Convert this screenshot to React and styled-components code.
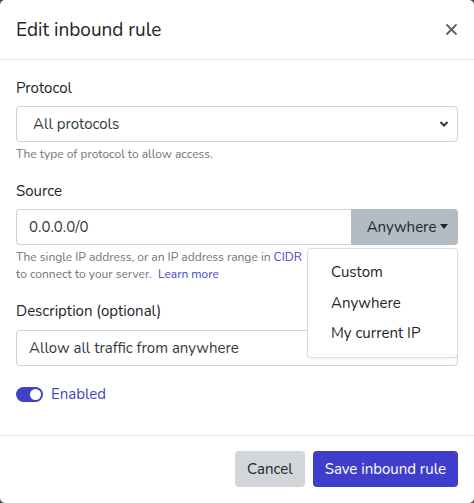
import styled, { createGlobalStyle } from "styled-components";

const Global = createGlobalStyle`
  html, body {
    margin: 0;
    padding: 0;
    background: #4a4a4a;
  }
  body {
    font-family: "Nunito", Lato, "Open Sans", sans-serif;
    color: #212529;
  }
  * { box-sizing: border-box; }
`;

const Modal = styled.div`
  width: 474px;
  height: 503px;
  background: #fff;
  border-radius: 5px;
  display: flex;
  flex-direction: column;
  overflow: hidden;
`;

const Header = styled.div`
  display: flex;
  align-items: center;
  justify-content: space-between;
  height: 60px;
  padding: 0 16px;
  border-bottom: 1px solid #e3e6ea;
`;

const Title = styled.h5`
  margin: 0;
  font-size: 19px;
  font-weight: 400;
  line-height: 28px;
  color: #212529;
`;

const Close = styled.button`
  border: 0;
  background: none;
  padding: 0;
  width: 20px;
  height: 20px;
  display: flex;
  align-items: center;
  justify-content: center;
  color: #5f6368;
  margin-right: -3px;
`;

const Body = styled.div`
  flex: 1;
  padding: 16px 16px 0;
  position: relative;
`;

const Group = styled.div`
  margin-bottom: 16px;
`;

const Label = styled.label`
  display: block;
  font-size: 15px;
  line-height: 24px;
  margin-bottom: ${({ $mb }) => $mb ?? 6}px;
`;

const SelectBox = styled.div`
  position: relative;
  height: 36px;
  border: 1px solid #ced4da;
  border-radius: 4px;
  display: flex;
  align-items: center;
  padding: 0 16px;
  font-size: 15px;
  color: #343a40;
`;

const Chevron = styled.svg`
  position: absolute;
  right: 8px;
  top: 13px;
`;

const Help = styled.small`
  display: block;
  margin-top: 4px;
  font-size: 12px;
  line-height: 17px;
  color: #6c757d;
`;

const Link = styled.a`
  color: #4545c4;
  text-decoration: none;
`;

const InputGroup = styled.div`
  display: flex;
  height: 36px;
  position: relative;
`;

const Input = styled.div`
  flex: 1;
  height: 36px;
  border: 1px solid #ced4da;
  border-radius: ${({ $joined }) => ($joined ? "4px 0 0 4px" : "4px")};
  ${({ $joined }) => $joined && "border-right: 0;"}
  display: flex;
  align-items: center;
  padding: 0 12px;
  font-size: 15px;
  color: #343a40;
`;

const AddonButton = styled.button`
  width: 107px;
  border: 0;
  border-radius: 0 4px 4px 0;
  background: #b3bcc5;
  font-family: inherit;
  font-size: 15px;
  color: #212529;
  display: flex;
  align-items: center;
  justify-content: center;
  gap: 4px;
  padding: 0 0 0 6px;

  &::after {
    content: "";
    border-top: 5px solid #212529;
    border-left: 4.5px solid transparent;
    border-right: 4.5px solid transparent;
    margin-top: -2px;
  }
`;

const Menu = styled.div`
  position: absolute;
  top: 39px;
  right: 0;
  width: 151px;
  padding: 8px 0;
  background: #fff;
  border: 1px solid rgba(0, 0, 0, 0.13);
  border-radius: 4px;
  box-shadow: 0 1px 3px rgba(0, 0, 0, 0.06);
  z-index: 2;
`;

const MenuItem = styled.div`
  padding: 4px 23px;
  font-size: 15px;
  line-height: 22.5px;
  color: #212529;
`;

const SwitchRow = styled.div`
  display: flex;
  align-items: center;
  gap: 8px;
  height: 24px;
  color: #4545c4;
  font-size: 15px;
`;

const Switch = styled.span`
  width: 27px;
  height: 15px;
  border-radius: 8px;
  background: #4040c8;
  position: relative;

  &::after {
    content: "";
    position: absolute;
    right: 2px;
    top: 2px;
    width: 11px;
    height: 11px;
    border-radius: 50%;
    background: #fff;
  }
`;

const Footer = styled.div`
  display: flex;
  justify-content: flex-end;
  align-items: flex-start;
  gap: 8px;
  height: 68px;
  padding: 15px 16px 0;
  border-top: 1px solid #e3e6ea;
`;

const Button = styled.button`
  height: 36px;
  padding: 0 12px;
  border: 0;
  border-radius: 4px;
  font-family: inherit;
  font-size: 15px;
  background: ${({ $primary }) => ($primary ? "#3e3ecb" : "#d2d5da")};
  color: ${({ $primary }) => ($primary ? "#fff" : "#212529")};
`;

export default function App() {
  return (
    <>
      <Global />
      <Modal>
        <Header>
          <Title>Edit inbound rule</Title>
          <Close aria-label="Close">
            <svg width="11" height="11" viewBox="0 0 11 11">
              <path d="M1 1L10 10M10 1L1 10" stroke="currentColor" strokeWidth="1.8" strokeLinecap="round" />
            </svg>
          </Close>
        </Header>
        <Body>
          <Group>
            <Label>Protocol</Label>
            <SelectBox>
              All protocols
              <Chevron width="10" height="8" viewBox="0 0 10 8">
                <path d="M1.5 2L5 5.5L8.5 2" stroke="#343a40" strokeWidth="2" fill="none" />
              </Chevron>
            </SelectBox>
            <Help>The type of protocol to allow access.</Help>
          </Group>
          <Group>
            <Label>Source</Label>
            <InputGroup>
              <Input $joined>0.0.0.0/0</Input>
              <AddonButton>Anywhere</AddonButton>
              <Menu>
                <MenuItem>Custom</MenuItem>
                <MenuItem>Anywhere</MenuItem>
                <MenuItem>My current IP</MenuItem>
              </Menu>
            </InputGroup>
            <Help>
              The single IP address, or an IP address range in <Link>CIDR</Link>
              <br />
              to connect to your server.&nbsp; <Link>Learn more</Link>
            </Help>
          </Group>
          <Group>
            <Label $mb={7}>Description (optional)</Label>
            <Input>Allow all traffic from anywhere</Input>
          </Group>
          <SwitchRow>
            <Switch />
            Enabled
          </SwitchRow>
        </Body>
        <Footer>
          <Button>Cancel</Button>
          <Button $primary>Save inbound rule</Button>
        </Footer>
      </Modal>
    </>
  );
}
